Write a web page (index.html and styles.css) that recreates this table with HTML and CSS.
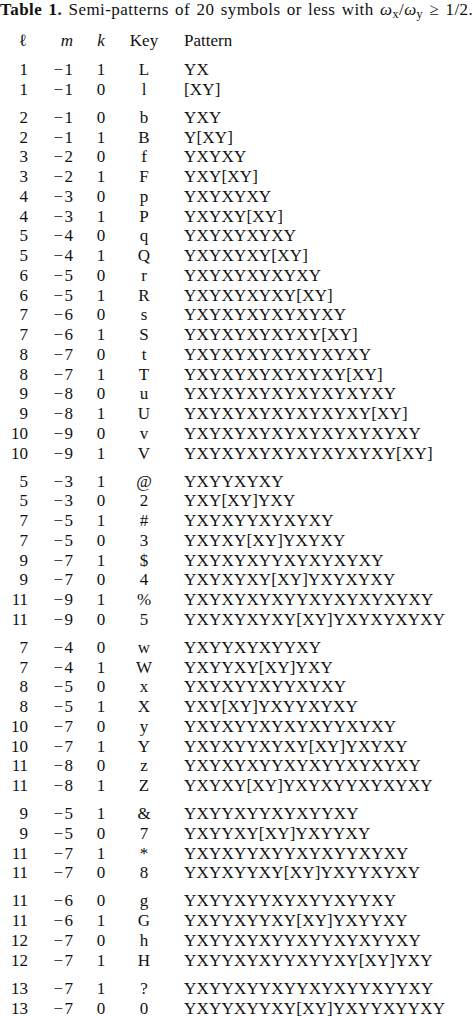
FILE: index.html
```html
<!DOCTYPE html>
<html lang="en">
<head>
<meta charset="utf-8">
<title>Table 1. Semi-patterns</title>
<link rel="stylesheet" href="styles.css">
</head>
<body>
<div class="page">
  <p class="caption"><b>Table 1.</b> Semi-patterns of 20 symbols or less with <i class="w">ω</i><span class="sub">x</span>/<i class="w">ω</i><span class="sub">y</span> ≥ 1/2.</p>
  <div class="table">
    <div class="row head"><span class="c1 ell">ℓ</span><span class="c2"><i>m</i></span><span class="c3"><i>k</i></span><span class="c4">Key</span><span class="c5">Pattern</span></div>

    <div class="group first">
      <div class="row"><span class="c1">1</span><span class="c2">−1</span><span class="c3">1</span><span class="c4">L</span><span class="c5">YX</span></div>
      <div class="row"><span class="c1">1</span><span class="c2">−1</span><span class="c3">0</span><span class="c4">l</span><span class="c5">[XY]</span></div>
    </div>

    <div class="group">
      <div class="row"><span class="c1">2</span><span class="c2">−1</span><span class="c3">0</span><span class="c4">b</span><span class="c5">YXY</span></div>
      <div class="row"><span class="c1">2</span><span class="c2">−1</span><span class="c3">1</span><span class="c4">B</span><span class="c5">Y[XY]</span></div>
      <div class="row"><span class="c1">3</span><span class="c2">−2</span><span class="c3">0</span><span class="c4">f</span><span class="c5">YXYXY</span></div>
      <div class="row"><span class="c1">3</span><span class="c2">−2</span><span class="c3">1</span><span class="c4">F</span><span class="c5">YXY[XY]</span></div>
      <div class="row"><span class="c1">4</span><span class="c2">−3</span><span class="c3">0</span><span class="c4">p</span><span class="c5">YXYXYXY</span></div>
      <div class="row"><span class="c1">4</span><span class="c2">−3</span><span class="c3">1</span><span class="c4">P</span><span class="c5">YXYXY[XY]</span></div>
      <div class="row"><span class="c1">5</span><span class="c2">−4</span><span class="c3">0</span><span class="c4">q</span><span class="c5">YXYXYXYXY</span></div>
      <div class="row"><span class="c1">5</span><span class="c2">−4</span><span class="c3">1</span><span class="c4">Q</span><span class="c5">YXYXYXY[XY]</span></div>
      <div class="row"><span class="c1">6</span><span class="c2">−5</span><span class="c3">0</span><span class="c4">r</span><span class="c5">YXYXYXYXYXY</span></div>
      <div class="row"><span class="c1">6</span><span class="c2">−5</span><span class="c3">1</span><span class="c4">R</span><span class="c5">YXYXYXYXY[XY]</span></div>
      <div class="row"><span class="c1">7</span><span class="c2">−6</span><span class="c3">0</span><span class="c4">s</span><span class="c5">YXYXYXYXYXYXY</span></div>
      <div class="row"><span class="c1">7</span><span class="c2">−6</span><span class="c3">1</span><span class="c4">S</span><span class="c5">YXYXYXYXYXY[XY]</span></div>
      <div class="row"><span class="c1">8</span><span class="c2">−7</span><span class="c3">0</span><span class="c4">t</span><span class="c5">YXYXYXYXYXYXYXY</span></div>
      <div class="row"><span class="c1">8</span><span class="c2">−7</span><span class="c3">1</span><span class="c4">T</span><span class="c5">YXYXYXYXYXYXY[XY]</span></div>
      <div class="row"><span class="c1">9</span><span class="c2">−8</span><span class="c3">0</span><span class="c4">u</span><span class="c5">YXYXYXYXYXYXYXYXY</span></div>
      <div class="row"><span class="c1">9</span><span class="c2">−8</span><span class="c3">1</span><span class="c4">U</span><span class="c5">YXYXYXYXYXYXYXY[XY]</span></div>
      <div class="row"><span class="c1">10</span><span class="c2">−9</span><span class="c3">0</span><span class="c4">v</span><span class="c5">YXYXYXYXYXYXYXYXYXY</span></div>
      <div class="row"><span class="c1">10</span><span class="c2">−9</span><span class="c3">1</span><span class="c4">V</span><span class="c5">YXYXYXYXYXYXYXYXY[XY]</span></div>
    </div>

    <div class="group">
      <div class="row"><span class="c1">5</span><span class="c2">−3</span><span class="c3">1</span><span class="c4">@</span><span class="c5">YXYYXYXY</span></div>
      <div class="row"><span class="c1">5</span><span class="c2">−3</span><span class="c3">0</span><span class="c4">2</span><span class="c5">YXY[XY]YXY</span></div>
      <div class="row"><span class="c1">7</span><span class="c2">−5</span><span class="c3">1</span><span class="c4">#</span><span class="c5">YXYXYYXYXYXY</span></div>
      <div class="row"><span class="c1">7</span><span class="c2">−5</span><span class="c3">0</span><span class="c4">3</span><span class="c5">YXYXY[XY]YXYXY</span></div>
      <div class="row"><span class="c1">9</span><span class="c2">−7</span><span class="c3">1</span><span class="c4">$</span><span class="c5">YXYXYXYYXYXYXYXY</span></div>
      <div class="row"><span class="c1">9</span><span class="c2">−7</span><span class="c3">0</span><span class="c4">4</span><span class="c5">YXYXYXY[XY]YXYXYXY</span></div>
      <div class="row"><span class="c1">11</span><span class="c2">−9</span><span class="c3">1</span><span class="c4">%</span><span class="c5">YXYXYXYXYYXYXYXYXYXY</span></div>
      <div class="row"><span class="c1">11</span><span class="c2">−9</span><span class="c3">0</span><span class="c4">5</span><span class="c5">YXYXYXYXY[XY]YXYXYXYXY</span></div>
    </div>

    <div class="group">
      <div class="row"><span class="c1">7</span><span class="c2">−4</span><span class="c3">0</span><span class="c4">w</span><span class="c5">YXYYXYXYYXY</span></div>
      <div class="row"><span class="c1">7</span><span class="c2">−4</span><span class="c3">1</span><span class="c4">W</span><span class="c5">YXYYXY[XY]YXY</span></div>
      <div class="row"><span class="c1">8</span><span class="c2">−5</span><span class="c3">0</span><span class="c4">x</span><span class="c5">YXYXYYXYYXYXY</span></div>
      <div class="row"><span class="c1">8</span><span class="c2">−5</span><span class="c3">1</span><span class="c4">X</span><span class="c5">YXY[XY]YXYYXYXY</span></div>
      <div class="row"><span class="c1">10</span><span class="c2">−7</span><span class="c3">0</span><span class="c4">y</span><span class="c5">YXYXYYXYXYXYYXYXY</span></div>
      <div class="row"><span class="c1">10</span><span class="c2">−7</span><span class="c3">1</span><span class="c4">Y</span><span class="c5">YXYXYYXYXY[XY]YXYXY</span></div>
      <div class="row"><span class="c1">11</span><span class="c2">−8</span><span class="c3">0</span><span class="c4">z</span><span class="c5">YXYXYXYYXYXYYXYXYXY</span></div>
      <div class="row"><span class="c1">11</span><span class="c2">−8</span><span class="c3">1</span><span class="c4">Z</span><span class="c5">YXYXY[XY]YXYXYYXYXYXY</span></div>
    </div>

    <div class="group">
      <div class="row"><span class="c1">9</span><span class="c2">−5</span><span class="c3">1</span><span class="c4">&amp;</span><span class="c5">YXYYXYYXYXYYXY</span></div>
      <div class="row"><span class="c1">9</span><span class="c2">−5</span><span class="c3">0</span><span class="c4">7</span><span class="c5">YXYYXY[XY]YXYYXY</span></div>
      <div class="row"><span class="c1">11</span><span class="c2">−7</span><span class="c3">1</span><span class="c4">*</span><span class="c5">YXYXYYXYYXYXYYXYXY</span></div>
      <div class="row"><span class="c1">11</span><span class="c2">−7</span><span class="c3">0</span><span class="c4">8</span><span class="c5">YXYXYYXY[XY]YXYYXYXY</span></div>
    </div>

    <div class="group">
      <div class="row"><span class="c1">11</span><span class="c2">−6</span><span class="c3">0</span><span class="c4">g</span><span class="c5">YXYYXYYXYXYYXYYXY</span></div>
      <div class="row"><span class="c1">11</span><span class="c2">−6</span><span class="c3">1</span><span class="c4">G</span><span class="c5">YXYYXYYXY[XY]YXYYXY</span></div>
      <div class="row"><span class="c1">12</span><span class="c2">−7</span><span class="c3">0</span><span class="c4">h</span><span class="c5">YXYYXYXYYXYYXYXYYXY</span></div>
      <div class="row"><span class="c1">12</span><span class="c2">−7</span><span class="c3">1</span><span class="c4">H</span><span class="c5">YXYYXYXYYXYYXY[XY]YXY</span></div>
    </div>

    <div class="group">
      <div class="row"><span class="c1">13</span><span class="c2">−7</span><span class="c3">1</span><span class="c4">?</span><span class="c5">YXYYXYYXYYXYXYYXYYXY</span></div>
      <div class="row"><span class="c1">13</span><span class="c2">−7</span><span class="c3">0</span><span class="c4">0</span><span class="c5">YXYYXYYXY[XY]YXYYXYYXY</span></div>
    </div>
  </div>
</div>
</body>
</html>
```

FILE: styles.css
```css
html, body {
  margin: 0;
  padding: 0;
  background: #ffffff;
}

body {
  font-family: "Liberation Serif", "Times New Roman", serif;
  color: #111111;
  font-size: 17px;
}

.page {
  width: 474px;
}

.caption {
  margin: 0;
  line-height: 19px;
  white-space: nowrap;
  font-size: 17px;
  letter-spacing: 0.45px;
  word-spacing: 1.6px;
}

.caption b {
  font-weight: bold;
}

.caption .w {
  font-style: italic;
}

.caption .sub {
  font-size: 12px;
  position: relative;
  top: 3px;
}

.table {
  margin-top: 10px;
  display: flex;
  flex-direction: column;
}

.group {
  margin-top: 8.3px;
}

.group.first {
  margin-top: 9.24px;
}

.row {
  display: grid;
  grid-template-columns: 28px 48px 50px 36px 1fr;
  height: 19.76px;
  line-height: 19.76px;
  white-space: nowrap;
}

.c1 {
  text-align: right;
}

.c2 {
  text-align: right;
  letter-spacing: 1.5px;
  padding-right: 1.5px;
}

.c3 {
  text-align: center;
}

.c4 {
  text-align: center;
}

.c5 {
  padding-left: 22px;
  letter-spacing: 0.2px;
}

.head .c5 {
  letter-spacing: 0;
}

.ell {
  padding-right: 1px;
}
```
